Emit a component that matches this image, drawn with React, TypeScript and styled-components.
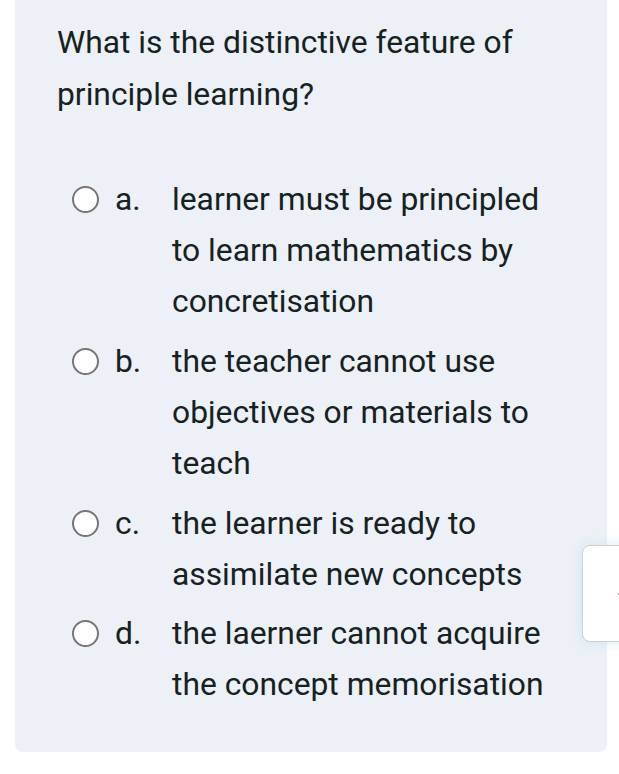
import React from "react";
import styled, { createGlobalStyle } from "styled-components";

const Global = createGlobalStyle`
  html, body { margin: 0; padding: 0; background: #ffffff; }
  body { font-family: Roboto, "Noto Sans", "Liberation Sans", sans-serif; }
`;

const Page = styled.div`
  width: 619px;
  height: 774px;
  position: relative;
  overflow: hidden;
  background: #ffffff;
`;

const Card = styled.div`
  margin-left: 15px;
  width: 592px;
  box-sizing: border-box;
  padding: 16px 42px 41px 42px;
  background: #edf1f7;
  border-radius: 0 0 8px 8px;
  color: #152222;
`;

const Question = styled.div`
  font-size: 31.8px;
  line-height: 52px;
  width: 480px;
`;

const Options = styled.div`
  margin-top: 54px;
  padding-left: 15px;
  display: flex;
  flex-direction: column;
  gap: 8.2px;
`;

const Option = styled.div`
  display: flex;
  align-items: flex-start;
  font-size: 31.8px;
  line-height: 51.2px;
`;

const Radio = styled.span`
  flex: none;
  width: 27px;
  height: 27px;
  box-sizing: border-box;
  border: 2px solid #757575;
  border-radius: 50%;
  background: #ffffff;
  margin-top: 12px;
`;

const Letter = styled.span`
  flex: none;
  width: 57px;
  margin-left: 16px;
`;

const Text = styled.span`
  width: 392px;
`;

const SideTab = styled.div`
  position: absolute;
  left: 582px;
  top: 545px;
  width: 60px;
  height: 97px;
  box-sizing: border-box;
  background: #ffffff;
  border: 1px solid #cfcfcf;
  border-radius: 8px;
  box-shadow: 0 0 14px rgba(170, 215, 235, 0.45);
`;

const Dot = styled.span`
  position: absolute;
  left: 35px;
  top: 47px;
  width: 2px;
  height: 2px;
  background: #9a7a80;
  border-radius: 50%;
`;

const options = [
  { letter: "a.", text: "learner must be principled to learn mathematics by concretisation" },
  { letter: "b.", text: "the teacher cannot use objectives or materials to teach" },
  { letter: "c.", text: "the learner is ready to assimilate new concepts" },
  { letter: "d.", text: "the laerner cannot acquire the concept memorisation" },
];

export default function App() {
  return (
    <Page>
      <Global />
      <Card>
        <Question>What is the distinctive feature of principle learning?</Question>
        <Options>
          {options.map((o) => (
            <Option key={o.letter}>
              <Radio />
              <Letter>{o.letter}</Letter>
              <Text>{o.text}</Text>
            </Option>
          ))}
        </Options>
      </Card>
      <SideTab>
        <Dot />
      </SideTab>
    </Page>
  );
}
